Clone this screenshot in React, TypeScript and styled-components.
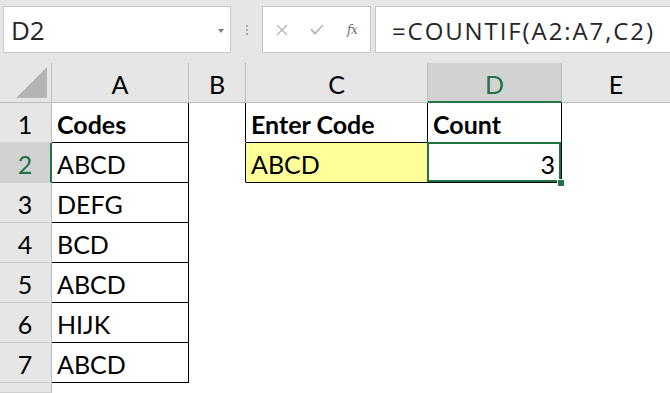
import React from "react";
import styled, { createGlobalStyle, css } from "styled-components";

const Global = createGlobalStyle`
  html, body { margin: 0; padding: 0; background: #ffffff; }
  body { width: 670px; height: 393px; overflow: hidden; }
`;

const GREEN = "#217346";
const HDR_BG = "#e6e6e6";
const HDR_SEL = "#d2d2d2";
const HDR_LINE = "#bdbdbd";

const Page = styled.div`
  width: 670px;
  height: 393px;
  overflow: hidden;
  background: #ffffff;
  display: flex;
  flex-direction: column;
`;

const FormulaBar = styled.div`
  height: 63px;
  flex: none;
  box-sizing: border-box;
  background: ${HDR_BG};
  display: flex;
  align-items: flex-start;
  padding: 6px 0 0 3px;
`;

const Box = styled.div`
  height: 47px;
  box-sizing: border-box;
  background: #ffffff;
  border: 1px solid #c6c6c6;
  display: flex;
  align-items: center;
`;

const NameBox = styled(Box)`
  width: 228px;
  padding: 0 6px 0 7px;
  justify-content: space-between;
`;

const NameText = styled.span`
  font-family: "Open Sans", sans-serif;
  font-size: 26px;
  color: #262626;
  line-height: 1;
  padding-top: 1px;
`;

const DropArrow = styled.span`
  width: 0;
  height: 0;
  border-left: 3px solid transparent;
  border-right: 3px solid transparent;
  border-top: 4px solid #7a7a7a;
  margin-top: 2px;
`;

const Grip = styled.div`
  width: 31px;
  height: 47px;
  display: flex;
  flex-direction: column;
  align-items: center;
  justify-content: center;
  gap: 2px;
`;

const GripDot = styled.span`
  width: 2px;
  height: 2px;
  background: #a8a8a8;
`;

const FxButtons = styled(Box)`
  width: 109px;
  padding: 0;
  position: relative;
`;

const FxSlot = styled.span<{ $w: number }>`
  width: ${(p) => p.$w}px;
  display: flex;
  justify-content: center;
  align-items: center;
`;

const FxLabel = styled.span`
  font-family: "DejaVu Serif", "Liberation Serif", serif;
  font-style: italic;
  font-size: 12px;
  color: #6b6b6b;
  letter-spacing: -0.5px;
`;

const FormulaInput = styled(Box)`
  flex: 1;
  margin-left: 4px;
  margin-right: -4px;
  padding-left: 16px;
  padding-top: 1px;
  font-family: "Open Sans", sans-serif;
  font-size: 24px;
  letter-spacing: 1.9px;
  color: #262626;
  white-space: nowrap;
`;

const Sheet = styled.div`
  flex: 1;
  display: grid;
  grid-template-columns: 52px 137px 57px 182px 134px 1fr;
  grid-template-rows: 40px repeat(7, 40px) 1fr;
  font-family: Lato, "Open Sans", sans-serif;
  font-size: 25px;
  color: #000000;
`;

const Corner = styled.div`
  background: ${HDR_BG};
  border-right: 1px solid ${HDR_LINE};
  border-bottom: 1px solid ${HDR_LINE};
  box-sizing: border-box;
  display: flex;
  align-items: flex-end;
  justify-content: flex-end;
  padding: 0 3px 3px 0;
`;

const ColHeader = styled.div<{ $sel?: boolean; $last?: boolean }>`
  box-sizing: border-box;
  background: ${(p) => (p.$sel ? HDR_SEL : HDR_BG)};
  border-right: ${(p) => (p.$last ? "none" : `1px solid ${HDR_LINE}`)};
  border-bottom: ${(p) => (p.$sel ? `2px solid ${GREEN}` : `1px solid ${HDR_LINE}`)};
  color: ${(p) => (p.$sel ? GREEN : "#000")};
  display: flex;
  align-items: center;
  justify-content: center;
  padding-top: ${(p) => (p.$sel ? "4px" : "3px")};
  line-height: 1.2;
`;

const RowHeader = styled.div<{ $sel?: boolean }>`
  box-sizing: border-box;
  background: ${(p) => (p.$sel ? HDR_SEL : HDR_BG)};
  border-right: ${(p) => (p.$sel ? `2px solid ${GREEN}` : `1px solid ${HDR_LINE}`)};
  border-bottom: 1px solid #cfcfcf;
  color: ${(p) => (p.$sel ? GREEN : "#000")};
  display: flex;
  align-items: center;
  justify-content: center;
  padding: 3px ${(p) => (p.$sel ? "0" : "1px")} 0 0;
  line-height: 1.2;
`;

const Cell = styled.div<{
  $r?: boolean;
  $b?: boolean;
  $bold?: boolean;
  $fill?: string;
  $right?: boolean;
  $selected?: boolean;
}>`
  box-sizing: border-box;
  position: relative;
  background: ${(p) => p.$fill ?? "#ffffff"};
  border-right: ${(p) => (p.$r ? "1px solid #000" : "1px solid transparent")};
  border-bottom: ${(p) => (p.$b ? "1px solid #000" : "1px solid transparent")};
  font-weight: ${(p) => (p.$bold ? 700 : 400)};
  display: flex;
  align-items: center;
  justify-content: ${(p) => (p.$right ? "flex-end" : "flex-start")};
  padding: 3px ${(p) => (p.$right ? "6px" : "0")} 0 ${(p) => (p.$right ? "0" : "5px")};
  line-height: 1.2;
  white-space: nowrap;
  ${(p) =>
    p.$selected &&
    css`
      &::after {
        content: "";
        position: absolute;
        top: -1px;
        left: -1px;
        right: 0;
        bottom: 0;
        border: 2px solid ${GREEN};
        pointer-events: none;
      }
    `}
`;

const FillHandle = styled.span`
  position: absolute;
  right: -3px;
  bottom: -4px;
  width: 6px;
  height: 6px;
  background: ${GREEN};
  outline: 1px solid #ffffff;
  z-index: 2;
`;

type CellDef = {
  text?: string;
  r?: boolean;
  b?: boolean;
  bold?: boolean;
  fill?: string;
  right?: boolean;
  selected?: boolean;
};

const codes = ["Codes", "ABCD", "DEFG", "BCD", "ABCD", "HIJK", "ABCD"];

function rowCells(i: number): CellDef[] {
  const a: CellDef = { text: codes[i], r: true, b: true, bold: i === 0 };
  const bCell: CellDef = { r: i <= 1 };
  let c: CellDef = {};
  let d: CellDef = {};
  if (i === 0) {
    c = { text: "Enter Code", r: true, b: true, bold: true };
    d = { text: "Count", r: true, b: true, bold: true };
  } else if (i === 1) {
    c = { text: "ABCD", r: true, b: true, fill: "#ffff99" };
    d = { text: "3", r: true, b: true, right: true, selected: true };
  }
  return [a, bCell, c, d, {}];
}

export default function App() {
  return (
    <Page>
      <Global />
      <FormulaBar>
        <NameBox>
          <NameText>D2</NameText>
          <DropArrow />
        </NameBox>
        <Grip>
          <GripDot />
          <GripDot />
          <GripDot />
        </Grip>
        <FxButtons>
          <FxSlot $w={38}>
            <svg width="12" height="12" viewBox="0 0 12 12">
              <path d="M1 1 L11 11 M11 1 L1 11" stroke="#b5b5b5" strokeWidth="1.3" fill="none" />
            </svg>
          </FxSlot>
          <FxSlot $w={34}>
            <svg width="14" height="11" viewBox="0 0 14 11">
              <path d="M1 5.5 L5 9.5 L13 1" stroke="#b5b5b5" strokeWidth="1.8" fill="none" />
            </svg>
          </FxSlot>
          <FxSlot $w={36}>
            <FxLabel>fx</FxLabel>
          </FxSlot>
        </FxButtons>
        <FormulaInput>=COUNTIF(A2:A7,C2)</FormulaInput>
      </FormulaBar>
      <Sheet>
        <Corner>
          <svg width="32" height="32" viewBox="0 0 32 32">
            <polygon points="31,0 31,31 0,31" fill="#b4b4b4" />
          </svg>
        </Corner>
        {["A", "B", "C", "D", "E"].map((l, i) => (
          <ColHeader key={l} $sel={l === "D"} $last={i === 4}>
            {l}
          </ColHeader>
        ))}
        {codes.map((_, i) => (
          <React.Fragment key={i}>
            <RowHeader $sel={i === 1}>{i + 1}</RowHeader>
            {rowCells(i).map((c, j) => (
              <Cell
                key={j}
                $r={c.r}
                $b={c.b}
                $bold={c.bold}
                $fill={c.fill}
                $right={c.right}
                $selected={c.selected}
              >
                {c.text}
                {c.selected && <FillHandle />}
              </Cell>
            ))}
          </React.Fragment>
        ))}
        <RowHeader />
      </Sheet>
    </Page>
  );
}
